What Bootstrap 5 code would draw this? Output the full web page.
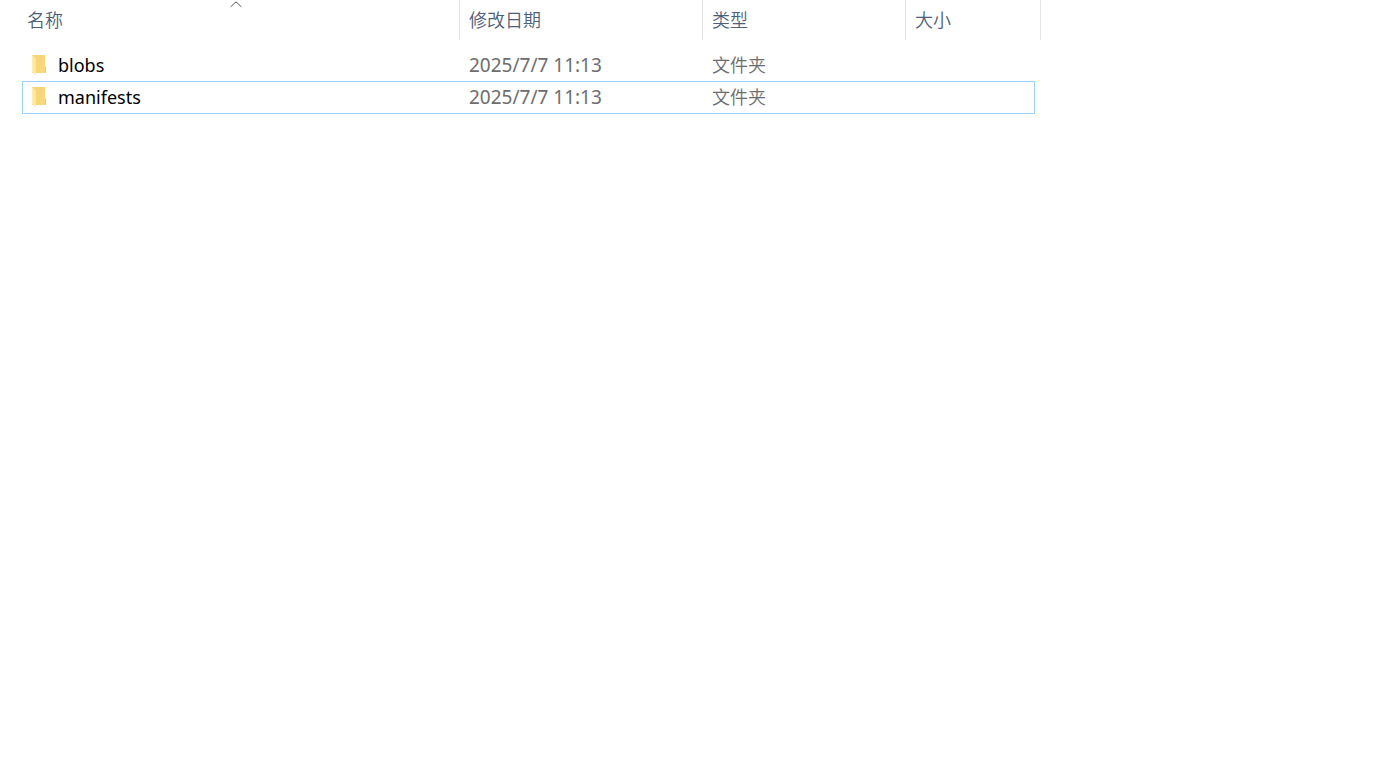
<!DOCTYPE html>
<html lang="zh-CN">
<head>
<meta charset="utf-8">
<meta name="viewport" content="width=device-width, initial-scale=1">
<title>文件夹</title>
<link href="https://cdn.jsdelivr.net/npm/bootstrap@5.3.0/dist/css/bootstrap.min.css" rel="stylesheet">
<style>
  body { background: #fff; font-family: "Noto Sans", "Noto Sans CJK SC", sans-serif; font-size: 18px; line-height: 24px; }
  .file-pane { padding-left: 22px; }
  .file-table { max-width: 1019px; table-layout: fixed; border-collapse: separate; border-spacing: 0; }
  .col-name { width: 43%; }
  .col-date { width: 243px; }
  .col-type { width: 203px; }
  .col-size { width: 129px; }
  .col-edge { width: 6px; }
  .file-table th { height: 40px; padding: 0; border-right: 1px solid #e5e5e5; }
  .sort-btn { height: 40px; padding: 0 9px 2px; color: #4c607a; font-family: "Noto Sans CJK SC", sans-serif; font-weight: 350; line-height: 24px; }
  th:first-child .sort-btn { padding-left: 5px; }
  .sort-mark { top: 1px; left: 49%; transform: translateX(-50%); }
  .list-gap { height: 9px; }
  .file-row td { height: 32px; padding: 0 9px; color: #6d6d6d; white-space: nowrap; vertical-align: middle; }
  .file-row .date-text { font-size: 19px; }
  .file-row .kind-text { padding-bottom: 2px; font-family: "Noto Sans CJK SC", sans-serif; font-weight: 350; }
  .file-row.focused td { height: 33px; padding-bottom: 2px; border: solid #99d1ff; border-width: 1px 0; }
  .file-row.focused .kind-text { padding-bottom: 4px; }
  .file-row.focused td:first-child { border-left-width: 1px; padding-left: 8px; }
  .file-row.focused td:nth-child(4) { border-right-width: 1px; }
  .file-row.focused td:last-child { border: 0; padding: 0; }
  .file-link { gap: 11px; color: #000; }
</style>
</head>
<body>
<svg class="position-absolute" width="0" height="0" aria-hidden="true">
  <defs>
    <linearGradient id="folder-back" x1="0" x2="1" y1="0" y2="1">
      <stop offset="0" stop-color="#f3d27a"/><stop offset="1" stop-color="#fbda78"/>
    </linearGradient>
    <linearGradient id="folder-front" x1="0" x2="1" y1="0" y2="0">
      <stop offset="0" stop-color="#ffecae"/><stop offset="1" stop-color="#ffe596"/>
    </linearGradient>
  </defs>
</svg>
<main class="file-pane">
  <table class="file-table w-100">
    <colgroup><col class="col-name"><col class="col-date"><col class="col-type"><col class="col-size"><col class="col-edge"></colgroup>
    <thead>
      <tr>
        <th scope="col" class="position-relative" aria-sort="ascending">
          <button type="button" class="sort-btn d-block w-100 border-0 bg-transparent text-start">名称</button>
          <svg class="sort-mark position-absolute" width="12" height="7" viewBox="0 0 12 7" fill="none" stroke="#555" aria-hidden="true"><path d="M.7 5.800 6 .8l5.300 5"/></svg>
        </th>
        <th scope="col"><button type="button" class="sort-btn d-block w-100 border-0 bg-transparent text-start">修改日期</button></th>
        <th scope="col"><button type="button" class="sort-btn d-block w-100 border-0 bg-transparent text-start">类型</button></th>
        <th scope="col" colspan="2"><button type="button" class="sort-btn d-block w-100 border-0 bg-transparent text-start">大小</button></th>
      </tr>
    </thead>
    <tbody>
      <tr aria-hidden="true"><td class="list-gap p-0" colspan="5"></td></tr>
      <tr class="file-row">
        <td><a href="#blobs" class="file-link d-flex align-items-center text-decoration-none">
          <svg width="16" height="22" viewBox="0 0 16 22" aria-hidden="true"><path fill="url(#folder-back)" d="M1 1h13v11l1 1v6H1z"/><path fill="url(#folder-front)" d="m1 1 4 3v17l-4-3z"/><path fill="#efc75f" d="M14 13h1v6h-1z"/></svg>
          <span>blobs</span></a></td>
        <td class="date-text">2025/7/7 11:13</td>
        <td class="kind-text">文件夹</td>
        <td></td>
        <td class="p-0"></td>
      </tr>
      <tr class="file-row focused">
        <td><a href="#manifests" class="file-link d-flex align-items-center text-decoration-none">
          <svg width="16" height="22" viewBox="0 0 16 22" aria-hidden="true"><path fill="url(#folder-back)" d="M1 1h13v11l1 1v6H1z"/><path fill="url(#folder-front)" d="m1 1 4 3v17l-4-3z"/><path fill="#efc75f" d="M14 13h1v6h-1z"/></svg>
          <span>manifests</span></a></td>
        <td class="date-text">2025/7/7 11:13</td>
        <td class="kind-text">文件夹</td>
        <td></td>
        <td></td>
      </tr>
    </tbody>
  </table>
</main>
<script src="https://cdn.jsdelivr.net/npm/bootstrap@5.3.0/dist/js/bootstrap.bundle.min.js"></script>
</body>
</html>
